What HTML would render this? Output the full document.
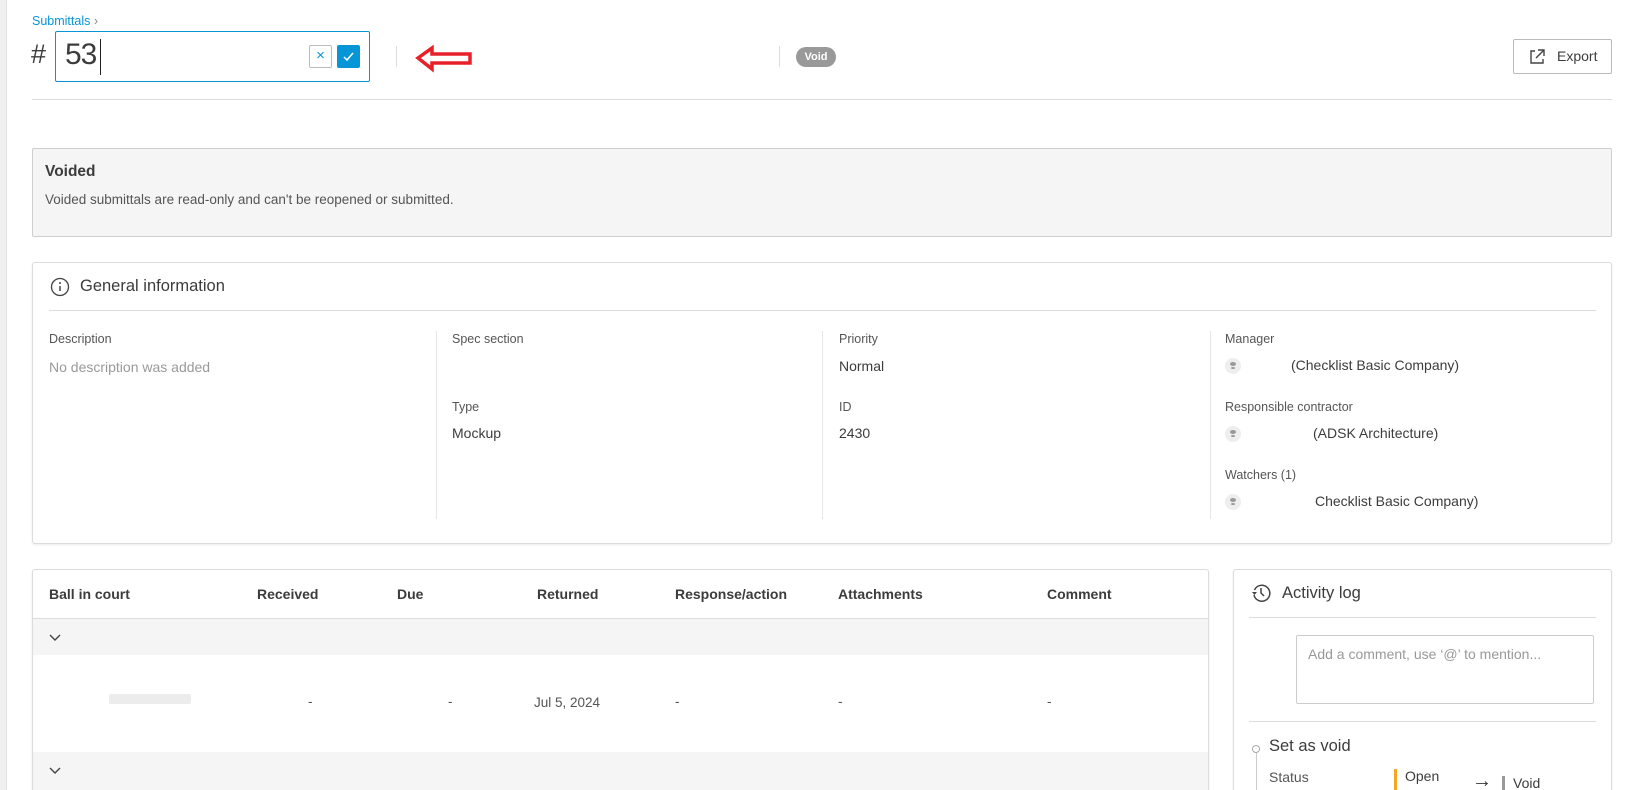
<!DOCTYPE html>
<html style="width:1634px;height:790px;overflow:hidden"><head><meta charset="utf-8"><style>
*{box-sizing:border-box;margin:0;padding:0}
body{width:1634px;height:790px;overflow:hidden;background:#fff;font-family:"Liberation Sans","DejaVu Sans",sans-serif;color:#3c3c3c;position:relative}
.a{position:absolute;white-space:nowrap}
.card{position:absolute;border:1px solid #dcdcdc;border-radius:3px;background:#fff;box-shadow:0 1px 2px rgba(0,0,0,.08)}
.lab{font-size:12.5px;color:#555}
.val{font-size:14px;color:#3c3c3c}
.av{display:inline-block;width:16px;height:16px;border-radius:50%;background:#eee;vertical-align:middle;position:relative}
.av:after{content:"";position:absolute;left:5px;top:4px;width:6px;height:4px;border-radius:50%;background:#999;box-shadow:0 4px 0 -1px #999}
.th{font-size:14px;font-weight:bold;color:#3c3c3c}
.td{font-size:13.5px;color:#555}
</style></head><body>
<div class="a" style="left:0;top:0;width:7px;height:790px;background:#f0f0f0;border-right:1px solid #e2e2e2"></div>

<div class="a" style="left:32px;top:14px;font-size:12.5px;color:#0696d7">Submittals <span style="color:#888">›</span></div>
<div class="a" style="left:31px;top:39px;font-size:27px;color:#3c3c3c">#</div>
<div class="a" style="left:55px;top:31px;width:315px;height:51px;border:1px solid #0696d7;border-radius:2px"></div>
<div class="a" style="left:65px;top:38px;font-size:30px;color:#3c3c3c;letter-spacing:-1px">53</div>
<div class="a" style="left:100px;top:39px;width:1px;height:36px;background:#222"></div>
<div class="a" style="left:309px;top:45px;width:23px;height:23px;border:1px solid #bbb;border-radius:2px;text-align:center;line-height:20px;font-size:15px;color:#0696d7">×</div>
<div class="a" style="left:337px;top:45px;width:23px;height:23px;background:#0696d7;border-radius:2px"><svg width="23" height="23"><path d="M7 12l3 3 6-7" stroke="#fff" stroke-width="1.5" fill="none"/></svg></div>
<div class="a" style="left:396px;top:46px;width:1px;height:21px;background:#ddd"></div>
<svg class="a" style="left:415px;top:45px" width="60" height="28"><path d="M3 13 L17 3 L17 9 L55 9 L55 18 L17 18 L17 24 Z" fill="none" stroke="#e8202a" stroke-width="3.5" stroke-linejoin="miter"/></svg>
<div class="a" style="left:779px;top:46px;width:1px;height:21px;background:#ddd"></div>
<div class="a" style="left:796px;top:47px;width:40px;height:20px;border-radius:10px;background:#999;color:#fff;font-size:11px;font-weight:bold;text-align:center;line-height:20px">Void</div>
<div class="a" style="left:1513px;top:39px;width:99px;height:35px;border:1px solid #bbb;border-radius:2px;font-size:14px;color:#3c3c3c;line-height:33px;padding-left:43px">Export</div>
<svg class="a" style="left:1527px;top:47px" width="20" height="20"><path d="M8 4H4v12h12v-4" stroke="#444" stroke-width="1.4" fill="none"/><path d="M11 3h6v6M17 3l-8 8" stroke="#444" stroke-width="1.4" fill="none"/></svg>
<div class="a" style="left:32px;top:99px;width:1580px;height:1px;background:#dcdcdc"></div>

<div class="a" style="left:32px;top:148px;width:1580px;height:89px;background:#f5f5f5;border:1px solid #cfcfcf;border-radius:2px"></div>
<div class="a" style="left:45px;top:163px;font-size:15.5px;font-weight:bold;color:#3c3c3c">Voided</div>
<div class="a" style="left:45px;top:192px;font-size:13.5px;color:#555">Voided submittals are read-only and can't be reopened or submitted.</div>

<div class="card" style="left:32px;top:262px;width:1580px;height:282px"></div>
<svg class="a" style="left:50px;top:277px" width="20" height="20"><circle cx="10" cy="10" r="8.5" stroke="#444" stroke-width="1.3" fill="none"/><path d="M10 9v5" stroke="#444" stroke-width="1.5"/><circle cx="10" cy="6" r="1" fill="#444"/></svg>
<div class="a" style="left:80px;top:277px;font-size:16.5px;color:#3c3c3c">General information</div>
<div class="a" style="left:49px;top:310px;width:1547px;height:1px;background:#dcdcdc"></div>
<div class="a" style="left:436px;top:331px;width:1px;height:188px;background:#e6e6e6"></div>
<div class="a" style="left:822px;top:331px;width:1px;height:188px;background:#e6e6e6"></div>
<div class="a" style="left:1210px;top:331px;width:1px;height:188px;background:#e6e6e6"></div>
<div class="a lab" style="left:49px;top:332px">Description</div>
<div class="a" style="left:49px;top:359px;font-size:14px;color:#999">No description was added</div>
<div class="a lab" style="left:452px;top:332px">Spec section</div>
<div class="a lab" style="left:452px;top:400px">Type</div>
<div class="a val" style="left:452px;top:425px">Mockup</div>
<div class="a lab" style="left:839px;top:332px">Priority</div>
<div class="a val" style="left:839px;top:358px">Normal</div>
<div class="a lab" style="left:839px;top:400px">ID</div>
<div class="a val" style="left:839px;top:425px">2430</div>
<div class="a lab" style="left:1225px;top:332px">Manager</div>
<div class="a val" style="left:1225px;top:357px"><span class="av"></span><span style="margin-left:50px">(Checklist Basic Company)</span></div>
<div class="a lab" style="left:1225px;top:400px">Responsible contractor</div>
<div class="a val" style="left:1225px;top:425px"><span class="av"></span><span style="margin-left:72px">(ADSK Architecture)</span></div>
<div class="a lab" style="left:1225px;top:468px">Watchers (1)</div>
<div class="a val" style="left:1225px;top:493px"><span class="av"></span><span style="margin-left:74px">Checklist Basic Company)</span></div>

<div class="card" style="left:32px;top:569px;width:1177px;height:230px"></div>
<div class="a th" style="left:49px;top:586px">Ball in court</div>
<div class="a th" style="left:257px;top:586px">Received</div>
<div class="a th" style="left:397px;top:586px">Due</div>
<div class="a th" style="left:537px;top:586px">Returned</div>
<div class="a th" style="left:675px;top:586px">Response/action</div>
<div class="a th" style="left:838px;top:586px">Attachments</div>
<div class="a th" style="left:1047px;top:586px">Comment</div>
<div class="a" style="left:33px;top:618px;width:1175px;height:1px;background:#dcdcdc"></div>
<div class="a" style="left:33px;top:619px;width:1175px;height:36px;background:#f5f5f5"></div>
<svg class="a" style="left:48px;top:631px" width="14" height="14"><path d="M2 4l5 5 5-5" stroke="#444" stroke-width="1.4" fill="none"/></svg>
<div class="a" style="left:109px;top:694px;width:82px;height:10px;background:#ececec;border-radius:2px"></div>
<div class="a td" style="left:308px;top:694px">-</div>
<div class="a td" style="left:448px;top:694px">-</div>
<div class="a td" style="left:534px;top:695px">Jul 5, 2024</div>
<div class="a td" style="left:675px;top:694px">-</div>
<div class="a td" style="left:838px;top:694px">-</div>
<div class="a td" style="left:1047px;top:694px">-</div>
<div class="a" style="left:33px;top:752px;width:1175px;height:38px;background:#f5f5f5"></div>
<svg class="a" style="left:48px;top:764px" width="14" height="14"><path d="M2 4l5 5 5-5" stroke="#444" stroke-width="1.4" fill="none"/></svg>

<div class="card" style="left:1233px;top:569px;width:379px;height:230px"></div>
<svg class="a" style="left:1250px;top:582px" width="22" height="22"><path d="M4.5 8A8 8 0 1 1 4 13" stroke="#444" stroke-width="1.5" fill="none"/><path d="M2 10l2.5 3 2.5-3z" fill="#444"/><path d="M11 6v5l3 3" stroke="#444" stroke-width="1.5" fill="none"/></svg>
<div class="a" style="left:1282px;top:584px;font-size:16.5px;color:#3c3c3c">Activity log</div>
<div class="a" style="left:1249px;top:617px;width:347px;height:1px;background:#dcdcdc"></div>
<div class="a" style="left:1296px;top:635px;width:298px;height:69px;border:1px solid #ccc;border-radius:2px"></div>
<div class="a" style="left:1308px;top:646px;font-size:14px;color:#999">Add a comment, use ‘@’ to mention...</div>
<div class="a" style="left:1249px;top:721px;width:347px;height:1px;background:#dcdcdc"></div>
<div class="a" style="left:1252px;top:745px;width:8px;height:8px;border:1.5px solid #aaa;border-radius:50%"></div>
<div class="a" style="left:1255.5px;top:753px;width:1px;height:40px;background:#ccc"></div>
<div class="a" style="left:1269px;top:737px;font-size:16.5px;color:#3c3c3c">Set as void</div>
<div class="a" style="left:1269px;top:769px;font-size:14px;color:#555">Status</div>
<div class="a" style="left:1394px;top:769px;width:3px;height:21px;background:#f5a623"></div>
<div class="a" style="left:1405px;top:768px;font-size:14px;color:#3c3c3c">Open</div>
<div class="a" style="left:1472px;top:770px;font-size:20px;color:#333">→</div>
<div class="a" style="left:1502px;top:776px;width:3px;height:14px;background:#999"></div>
<div class="a" style="left:1513px;top:775px;font-size:14px;color:#3c3c3c">Void</div>
</body></html>
